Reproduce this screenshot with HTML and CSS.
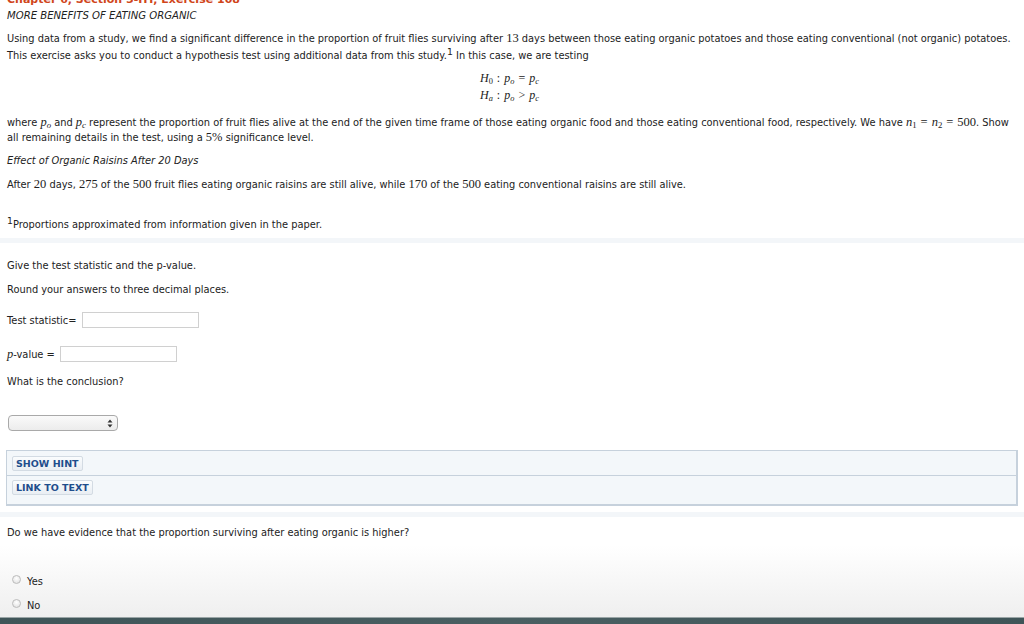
FILE: index.html
```html
<!DOCTYPE html>
<html>
<head>
<meta charset="utf-8">
<link rel="stylesheet" href="styles.css">
</head>
<body>
<div class="page">
  <div class="top">
    <div class="chapter">Chapter 6, Section 5-HT, Exercise 108</div>
    <div class="title">MORE BENEFITS OF EATING ORGANIC</div>
    <p class="para p1">Using data from a study, we find a significant difference in the proportion of fruit flies surviving after <span class="m">13</span> days between those eating organic potatoes and those eating conventional (not organic) potatoes. This exercise asks you to conduct a hypothesis test using additional data from this study.<sup>1</sup> In this case, we are testing</p>
    <div class="math">
      <div><i>H</i><sub>0</sub><span class="op">:</span><i>p</i><sub><i>o</i></sub><span class="op">=</span><i>p</i><sub><i>c</i></sub></div>
      <div><i>H</i><sub><i>a</i></sub><span class="op">:</span><i>p</i><sub><i>o</i></sub><span class="op">&gt;</span><i>p</i><sub><i>c</i></sub></div>
    </div>
    <p class="para p2">where <span class="m"><i>p</i><sub><i>o</i></sub></span> and <span class="m"><i>p</i><sub><i>c</i></sub></span> represent the proportion of fruit flies alive at the end of the given time frame of those eating organic food and those eating conventional food, respectively. We have <span class="m"><i>n</i><sub>1</sub><span class="op">=</span><i>n</i><sub>2</sub><span class="op">=</span>500</span>. Show all remaining details in the test, using a <span class="m">5%</span> significance level.</p>
    <p class="para em">Effect of Organic Raisins After 20 Days</p>
    <p class="para p4">After <span class="m">20</span> days, <span class="m">275</span> of the <span class="m">500</span> fruit flies eating organic raisins are still alive, while <span class="m">170</span> of the <span class="m">500</span> eating conventional raisins are still alive.</p>
    <p class="foot"><sup>1</sup>Proportions approximated from information given in the paper.</p>
  </div>
  <div class="band"></div>
  <div class="part">
    <p class="line l1">Give the test statistic and the p-value.</p>
    <p class="line l2">Round your answers to three decimal places.</p>
    <div class="field f1"><span>Test statistic=</span><span class="input"></span></div>
    <div class="field f2"><span><i class="mi">p</i>-value =</span><span class="input"></span></div>
    <p class="line l3">What is the conclusion?</p>
    <div class="select"><span class="arrows"><svg width="6" height="9" viewBox="0 0 6 9"><path d="M3 0.5 L5.5 3.5 H0.5Z M3 8.5 L5.5 5.5 H0.5Z" fill="#333"/></svg></span></div>
    <div class="hintbox">
      <div class="hrow"><span class="btn">SHOW HINT</span></div>
      <div class="hrow last"><span class="btn">LINK TO TEXT</span></div>
    </div>
  </div>
  <div class="band b2"></div>
  <div class="part">
    <p class="line l4">Do we have evidence that the proportion surviving after eating organic is higher?</p>
    <div class="radios">
      <label class="radio"><span class="dot"></span>Yes</label>
      <label class="radio"><span class="dot"></span>No</label>
    </div>
  </div>
</div>
<div class="bottombar"></div>
</body>
</html>
```
FILE: styles.css
```css
html, body {
  margin: 0;
  padding: 0;
}
body {
  width: 1024px;
  height: 624px;
  overflow: hidden;
  font-family: "DejaVu Sans", Verdana, sans-serif;
  font-size: 9.85px;
  color: #222;
  background: linear-gradient(#ffffff 0, #ffffff 545px, #efefef 616px);
  display: flex;
  flex-direction: column;
}
.page {
  flex: 1;
}
.top {
  padding: 0 7px;
}
.chapter {
  color: #d0451b;
  font-weight: bold;
  font-size: 11px;
  height: 6px;
  line-height: 0;
  overflow: hidden;
}
.title {
  font-style: italic;
  margin-top: 2px;
  line-height: 16px;
  font-size: 10.1px;
}
.para {
  margin: 0;
}
.p1 {
  margin-top: 6px;
  line-height: 17px;
}
.m {
  font-family: "Liberation Serif", "Times New Roman", serif;
  font-size: 12.5px;
}
.op {
  margin: 0 4px;
}
sub {
  font-size: 70%;
  vertical-align: -2px;
  line-height: 0;
}
sup {
  font-size: 95%;
  vertical-align: 4px;
  line-height: 0;
}
.math {
  font-family: "Liberation Serif", "Times New Roman", serif;
  font-size: 12px;
  line-height: 17px;
  padding-left: 473px;
  margin-top: 6px;
}
.p2 {
  margin-top: 11px;
  line-height: 15px;
}
.em {
  font-style: italic;
  margin-top: 8px;
  line-height: 15px;
}
.p4 {
  margin-top: 9px;
  line-height: 15px;
}
.foot {
  margin: 25px 0 0;
  line-height: 15px;
}
.band {
  height: 5px;
  background: #f3f6f9;
  margin-top: 6px;
}
.part {
  padding: 0 7px;
}
.line {
  margin: 0;
  line-height: 15px;
}
.l1 { margin-top: 15px; }
.l2 { margin-top: 9px; }
.l3 { margin-top: 12px; }
.l4 { margin-top: 8px; }
.field {
  display: flex;
  align-items: center;
  gap: 3px;
  height: 16px;
}
.f1 { margin-top: 15px; }
.f2 { margin-top: 18px; }
.f1 .input { margin-left: 2px; }
.f2 .input { margin-left: 2px; }
.mi {
  font-family: "Liberation Serif", serif;
  font-size: 12.5px;
}
.input {
  display: block;
  width: 115px;
  height: 14px;
  border: 1px solid #d0d0d0;
  background: #fff;
}
.select {
  margin-top: 26px;
  margin-left: 1px;
  width: 104px;
  height: 14px;
  border: 1px solid #a9a9a9;
  border-radius: 4px;
  background: linear-gradient(#fafafa, #ececec);
  display: flex;
  justify-content: flex-end;
  align-items: center;
  padding-right: 4px;
}
.arrows {
  display: block;
  width: 6px;
  height: 9px;
}
.arrows svg { display: block; }
.hintbox {
  margin: 19px 0 0 -1px;
  width: 1009px;
  border: 1px solid #c6d1dc;
  border-right-width: 2px;
  border-bottom-width: 2px;
  background: #f3f7fa;
}
.hrow {
  height: 24px;
  border-bottom: 1px solid #c6d1dc;
  display: flex;
  align-items: center;
  padding-left: 5px;
}
.hrow.last {
  border-bottom: none;
  height: 28px;
  align-items: flex-start;
  padding-top: 4px;
  box-sizing: border-box;
}
.btn {
  display: block;
  font-weight: bold;
  font-size: 9.5px;
  color: #1f4e8c;
  padding: 1px 3px;
  border: 1px solid #d3dbe3;
  border-radius: 2px;
  background: linear-gradient(#fafcfd, #e9eef3);
  line-height: 11px;
}
.band.b2 {
  margin-top: 6px;
}
.radios {
  margin-top: 34px;
  padding-left: 5px;
  display: flex;
  flex-direction: column;
  gap: 9px;
}
.radio {
  display: flex;
  align-items: center;
  gap: 6px;
  height: 15px;
}
.dot {
  display: block;
  width: 7px;
  height: 7px;
  border-radius: 50%;
  border: 1px solid #bcbcbc;
  background: radial-gradient(circle at 50% 35%, #ffffff, #dedede);
  margin-top: -5px;
}
.bottombar {
  height: 6px;
  border-top: 1px solid #9aa5a6;
  background: linear-gradient(90deg, #3f5558, #4a5f62 50%, #3f5558);
}
```
